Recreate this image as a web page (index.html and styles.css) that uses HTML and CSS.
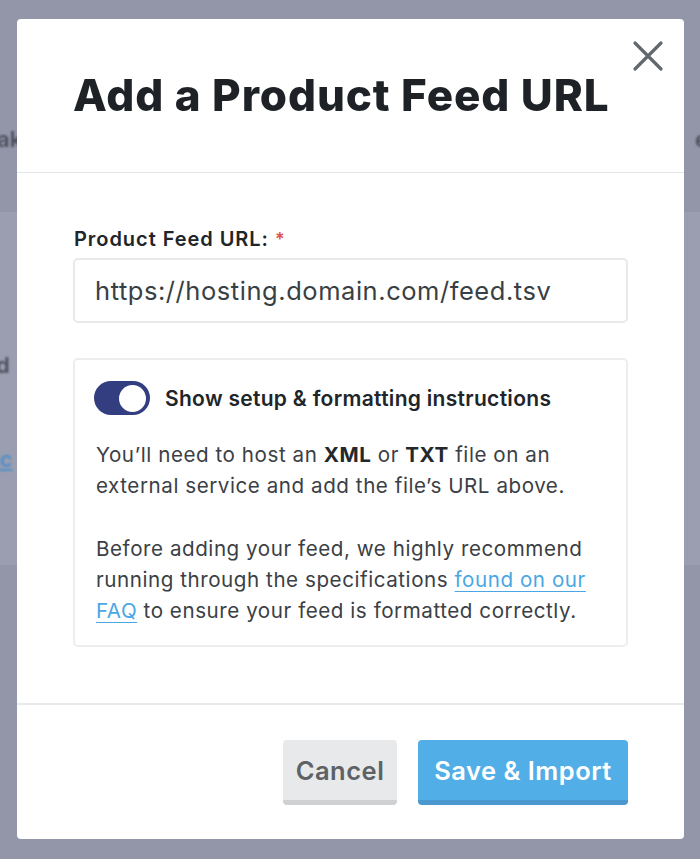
FILE: index.html
```html
<!DOCTYPE html>
<html lang="en">
<head>
<meta charset="utf-8">
<title>Add a Product Feed URL</title>
<link rel="stylesheet" href="styles.css">
</head>
<body>
<div class="backdrop">
  <div class="band band-top">
    <span class="ghost ghost-left">ak</span>
    <span class="ghost ghost-right">e</span>
  </div>
  <div class="band band-mid">
    <span class="ghost ghost-d">d</span>
    <span class="ghost ghost-link">ic</span>
  </div>
  <div class="band band-bottom"></div>
</div>

<div class="modal" role="dialog" aria-labelledby="modal-title">
  <header class="modal-header">
    <h1 id="modal-title" class="modal-title">Add a Product Feed URL</h1>
    <button class="close-btn" aria-label="Close">
      <svg width="32" height="32" viewBox="0 0 32 32" aria-hidden="true">
        <path d="M3 3 L29 29 M29 3 L3 29" stroke="#62686e" stroke-width="3.2" stroke-linecap="round" fill="none"/>
      </svg>
    </button>
  </header>

  <section class="modal-body">
    <label class="field-label" for="feed-url">Product Feed URL: <span class="req">*</span></label>
    <div class="input-box" id="feed-url">https://hosting.domain.com/feed.tsv</div>

    <div class="info-box">
      <div class="toggle-row">
        <span class="toggle"><span class="knob"></span></span>
        <span class="toggle-label">Show setup &amp; formatting instructions</span>
      </div>
      <p class="info-text">You’ll need to host an <b>XML</b> or <b>TXT</b> file on an external service and add the file’s URL above.</p>
      <p class="info-text">Before adding your feed, we highly recommend running through the specifications <a href="#" class="link">found on our FAQ</a> to ensure your feed is formatted correctly.</p>
    </div>
  </section>

  <footer class="modal-footer">
    <button class="btn btn-cancel">Cancel</button>
    <button class="btn btn-primary">Save &amp; Import</button>
  </footer>
</div>
</body>
</html>
```

FILE: styles.css
```css
* { box-sizing: border-box; }

html, body {
  margin: 0;
  height: 859px;
  overflow: hidden;
}

body {
  font-family: Inter, "Noto Sans", sans-serif;
  background: #9296a8;
}

.backdrop {
  display: flex;
  flex-direction: column;
  height: 859px;
}

.band { position: relative; overflow: hidden; }
.band-top { height: 212px; background: #9296a8; }
.band-mid { height: 353px; background: #9a9eb0; }
.band-bottom { flex: 1; background: #9296a8; }

.ghost {
  position: absolute;
  font-size: 22px;
  font-weight: 600;
  color: #4b4f5c;
  filter: blur(1.2px);
}
.ghost-left { left: -3px; top: 126px; }
.ghost-right { right: -8px; top: 126px; }
.ghost-d { left: -4px; top: 140px; }
.ghost-link { left: -6px; top: 234px; color: #4f8fc7; text-decoration: underline; }

.modal {
  position: fixed;
  left: 17px;
  top: 19px;
  width: 667px;
  height: 820px;
  background: #ffffff;
  border-radius: 4px;
  display: flex;
  flex-direction: column;
}

.modal-header {
  position: relative;
  height: 154px;
  border-bottom: 1px solid #e4e5e7;
  display: flex;
  align-items: center;
  padding: 0 40px 2px 56px;
}

.modal-title {
  margin: 0;
  font-size: 44px;
  font-weight: 800;
  color: #1e2226;
  letter-spacing: 0.9px;
  white-space: nowrap;
}

.close-btn {
  position: absolute;
  top: 21px;
  right: 20px;
  width: 32px;
  height: 32px;
  padding: 0;
  border: 0;
  background: none;
  cursor: pointer;
}
.close-btn svg { display: block; }

.modal-body {
  padding: 55px 56px 0 56px;
  flex: 1;
}

.field-label {
  display: block;
  margin-left: 1px;
  font-size: 20px;
  font-weight: 600;
  line-height: 22px;
  letter-spacing: 0.95px;
  color: #212529;
}
.req { color: #d9534f; font-size: 18px; }

.input-box {
  margin-top: 7px;
  height: 65px;
  border: 2px solid #e8e9ea;
  border-radius: 5px;
  padding: 0 20px;
  display: flex;
  align-items: center;
  font-size: 25.5px;
  letter-spacing: 0.55px;
  color: #3a3f44;
}

.info-box {
  margin-top: 35px;
  border: 2px solid #ecedee;
  border-radius: 5px;
  padding: 21px 20px 19px 19px;
}

.toggle-row {
  display: flex;
  align-items: center;
  gap: 15px;
}

.toggle {
  flex: none;
  width: 56px;
  height: 34px;
  border-radius: 17px;
  background: #323e7f;
  display: flex;
  align-items: center;
  justify-content: flex-end;
  padding-right: 4px;
}
.knob {
  width: 27px;
  height: 27px;
  border-radius: 50%;
  background: #ffffff;
}

.toggle-label {
  font-size: 21px;
  font-weight: 600;
  letter-spacing: 0.3px;
  color: #212529;
  white-space: nowrap;
}

.info-text {
  margin: 0;
  font-size: 20.6px;
  line-height: 31px;
  letter-spacing: 0.55px;
  color: #3b4045;
  padding-left: 2px;
}
.toggle-row + .info-text { margin-top: 24px; }
.info-text + .info-text { margin-top: 32px; }
.info-text b { font-weight: 700; color: #24282c; }

.link {
  color: #4aa7e4;
  text-decoration: underline;
  text-decoration-thickness: 1px;
  text-underline-offset: 4px;
}

.modal-footer {
  height: 136px;
  border-top: 2px solid #e8e9ea;
  display: flex;
  justify-content: flex-end;
  align-items: flex-start;
  gap: 21px;
  padding: 35px 56px 0 0;
}

.btn {
  height: 65px;
  border: 0;
  border-radius: 4px;
  font-family: inherit;
  font-size: 25.5px;
  font-weight: 600;
  letter-spacing: 0.5px;
  cursor: pointer;
  padding: 0;
}

.btn-cancel {
  width: 114px;
  background: #e8e9ea;
  color: #5d6267;
  border-bottom: 5px solid #cfd0d2;
}

.btn-primary {
  width: 210px;
  background: #52aee6;
  color: #ffffff;
  border-bottom: 5px solid #4999cf;
}
```
